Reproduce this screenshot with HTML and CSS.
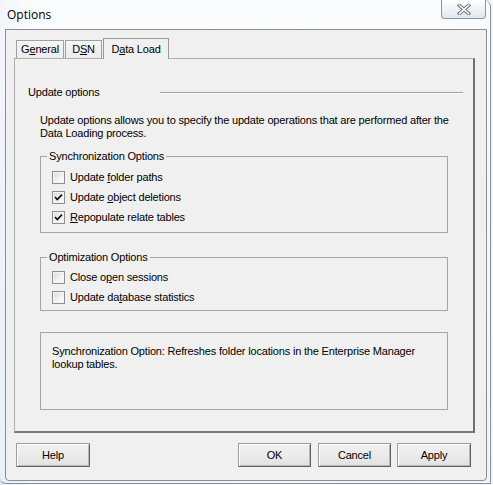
FILE: index.html
```html
<!DOCTYPE html>
<html>
<head>
<meta charset="utf-8">
<title>Options</title>
<link rel="stylesheet" href="styles.css">
</head>
<body>
<div class="window">
  <div class="titlebar">
    <span class="title">Options</span>
    <span class="close">
      <svg width="14" height="11" viewBox="0 0 14 11">
        <path d="M2.5 1.5 L11.5 9.5 M11.5 1.5 L2.5 9.5" stroke="#6f7378" stroke-width="3.6" stroke-linecap="square" fill="none"/>
        <path d="M2.5 1.5 L11.5 9.5 M11.5 1.5 L2.5 9.5" stroke="#ffffff" stroke-width="1.6" stroke-linecap="square" fill="none"/>
      </svg>
    </span>
  </div>
  <div class="client">
    <div class="tabs">
      <div class="tab tab-general">G<u>e</u>neral</div>
      <div class="tab tab-dsn">D<u>S</u>N</div>
      <div class="tab tab-data selected">D<u>a</u>ta Load</div>
    </div>
    <div class="panel">
      <div class="heading">
        <span class="heading-label">Update options</span>
        <span class="heading-line"></span>
      </div>
      <div class="content">
        <p class="desc">Update options allows you to specify the update operations that are performed after the Data Loading process.</p>
        <fieldset class="group group-sync">
          <legend>Synchronization Options</legend>
          <div class="row"><span class="cb"></span><span class="lbl">Update <u>f</u>older paths</span></div>
          <div class="row"><span class="cb checked"><svg width="11" height="11" viewBox="0 0 11 11"><path d="M2 5 L4.3 7.6 L9 2.6" stroke="#111" stroke-width="1.7" fill="none"/></svg></span><span class="lbl">Update <u>o</u>bject deletions</span></div>
          <div class="row"><span class="cb checked"><svg width="11" height="11" viewBox="0 0 11 11"><path d="M2 5 L4.3 7.6 L9 2.6" stroke="#111" stroke-width="1.7" fill="none"/></svg></span><span class="lbl"><u>R</u>epopulate relate tables</span></div>
        </fieldset>
        <fieldset class="group group-opt">
          <legend>Optimization Options</legend>
          <div class="row"><span class="cb"></span><span class="lbl">Close o<u>p</u>en sessions</span></div>
          <div class="row"><span class="cb"></span><span class="lbl">Update da<u>t</u>abase statistics</span></div>
        </fieldset>
        <div class="infobox">Synchronization Option: Refreshes folder locations in the Enterprise Manager lookup tables.</div>
      </div>
    </div>
    <div class="buttons">
      <button class="btn btn-help">Help</button>
      <span class="spacer"></span>
      <button class="btn">OK</button>
      <button class="btn">Cancel</button>
      <button class="btn btn-apply">Apply</button>
    </div>
  </div>
</div>
</body>
</html>
```
FILE: styles.css
```css
html, body {
  margin: 0;
  padding: 0;
}
body {
  width: 493px;
  height: 485px;
  overflow: hidden;
  background: linear-gradient(90deg, #dfe9f5 0px, #f3f6fa 30px, #f7f9fc 60%, #f2f5f9 100%);
  font-family: "Liberation Sans", Arial, sans-serif;
  font-size: 11px;
  letter-spacing: -0.18px;
  color: #000;
}
.window {
  width: 491px;
  height: 484px;
  border-right: 1px solid #8a9099;
  border-bottom: 1px solid #8a9099;
  border-radius: 0 7px 0 6px;
  box-sizing: border-box;
  background: linear-gradient(180deg, rgba(255,255,255,0.6), rgba(240,244,250,0.6));
}
.titlebar {
  height: 29px;
  display: flex;
  justify-content: space-between;
  align-items: flex-start;
}
.title {
  font-family: "Open Sans", "Noto Sans", sans-serif;
  font-size: 12px;
  letter-spacing: 0;
  padding: 6px 0 0 7px;
  color: #000;
}
.close {
  width: 45px;
  height: 19px;
  margin-right: 4px;
  box-sizing: border-box;
  border: 1px solid #8e959e;
  border-top: none;
  border-radius: 0 0 4px 4px;
  background: linear-gradient(180deg, #ffffff 0%, #eef1f5 55%, #e2e7ee 100%);
  display: flex;
  align-items: center;
  justify-content: center;
}
.client {
  width: 482px;
  height: 452px;
  margin-left: 5px;
  box-sizing: border-box;
  border: 1px solid #8d8d8d;
  border-radius: 0 0 4px 4px;
  background: #f0f0f0;
  padding: 8px 0 0 8px;
}
.tabs {
  height: 20px;
  display: flex;
  align-items: flex-end;
  padding-left: 2px;
  position: relative;
  z-index: 1;
}
.tab {
  height: 18px;
  box-sizing: border-box;
  border: 1px solid #a0a0a0;
  border-bottom: none;
  background: linear-gradient(180deg, #f6f6f6, #ebebeb);
  text-align: center;
  line-height: 17px;
}
.tab-general { width: 48px; }
.tab-dsn { width: 37px; margin-left: 1px; }
.tab-data { width: 66px; margin-left: 1px; }
.tab.selected {
  height: 21px;
  margin-bottom: -1px;
  background: #f0f0f0;
  border-color: #9a9a9a;
  padding-top: 2px;
  line-height: 16px;
}
.panel {
  width: 461px;
  height: 375px;
  box-sizing: border-box;
  border: 1px solid #b0b0b0;
  border-right: 2px solid #6f6f6f;
  border-bottom: 2px solid #7a7a7a;
  background: #f0f0f0;
  padding: 27px 10px 0 13px;
}
.heading {
  display: flex;
  align-items: center;
  height: 13px;
  line-height: 13px;
}
.heading-label {
  width: 132px;
  flex: none;
}
.heading-line {
  flex: 1;
  height: 0;
  border-top: 1px solid #a0a0a0;
  border-bottom: 1px solid #ffffff;
}
.content {
  margin-left: 12px;
}
.desc {
  margin: 15px 0 0 0;
  width: 416px;
  line-height: 13px;
}
.group {
  width: 408px;
  box-sizing: border-box;
  margin: 10px 0 0 0;
  border: 1px solid #a5a5a5;
  padding: 4px 0 5px 6px;
  min-width: 0;
}
.group legend {
  padding: 0 2px;
  line-height: 13px;
}
.group-opt {
  margin-top: 18px;
  padding-top: 3px;
  padding-bottom: 3px;
}
.row {
  height: 20px;
  display: flex;
  align-items: center;
  padding-left: 5px;
}
.cb {
  width: 13px;
  height: 13px;
  box-sizing: border-box;
  border: 1px solid #8e8f8f;
  background: linear-gradient(135deg, #d8d8d8 0%, #f0f0f0 50%, #ffffff 100%);
  box-shadow: inset 0 0 0 1px #f4f4f4;
  display: flex;
  align-items: center;
  justify-content: center;
  flex: none;
}
.cb svg {
  display: block;
}
.lbl {
  margin-left: 5px;
  line-height: 13px;
}
.infobox {
  width: 408px;
  height: 78px;
  box-sizing: border-box;
  margin-top: 21px;
  border: 1px solid #a5a5a5;
  padding: 12px 20px 0 11px;
  line-height: 13px;
}
.buttons {
  width: 461px;
  box-sizing: border-box;
  margin-top: 10px;
  padding: 0 4px 0 2px;
  display: flex;
  gap: 7px;
}
.spacer {
  flex: 1;
}
.btn {
  width: 73px;
  height: 24px;
  box-sizing: border-box;
  margin: 0;
  padding: 0;
  font-family: "Liberation Sans", Arial, sans-serif;
  font-size: 11px;
  letter-spacing: -0.18px;
  color: #000;
  border: 1px solid #9c9c9c;
  border-right-color: #606060;
  border-bottom-color: #606060;
  border-radius: 1px;
  background: linear-gradient(180deg, #f0f0f0 0%, #ebebeb 50%, #e1e1e1 100%);
  box-shadow: inset 1px 1px 0 #ffffff, inset -1px -1px 0 #b9b9b9;
}
.btn-help, .btn-apply {
  width: 74px;
}
.btn-apply {
  margin-left: -1px;
}
```
